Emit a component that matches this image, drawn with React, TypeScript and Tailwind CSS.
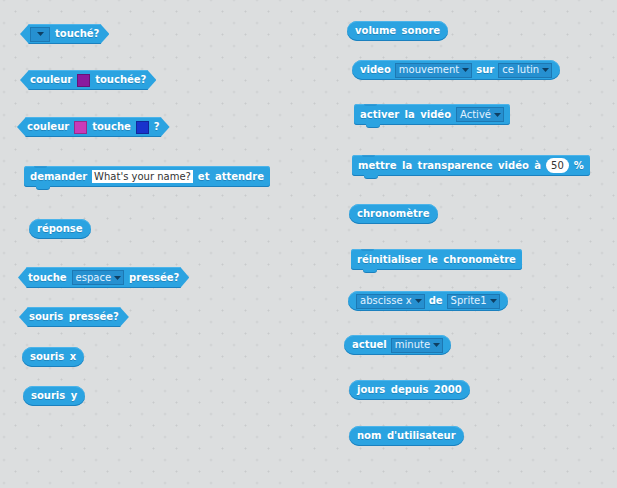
import React from "react";

const font = "font-['DejaVu_Sans',Verdana,sans-serif]";
const label = `${font} text-[10px] font-bold text-white leading-none [word-spacing:2px] [text-shadow:0_1px_0_rgba(0,40,80,0.25)] whitespace-nowrap`;
const body = "bg-[#2ba3e1] shadow-[inset_0_-1px_0_#1b80be,inset_0_1px_0_#4cb4ea]";

const Arrow = () => (
  <svg width="7" height="4" viewBox="0 0 7 4" className="shrink-0">
    <path d="M0 0 L7 0 L3.5 4 Z" fill="#0e3f63" />
  </svg>
);

const Drop = ({ text }: { text?: string }) => (
  <span className={`inline-flex h-[15px] items-center gap-[3px] bg-[#2690d0] border border-[#1d78b3] pl-[3px] pr-[2px] ${text ? "" : "w-[20px] justify-center"}`}>
    {text && <span className={`${font} text-[10px] font-normal text-[#e2f2ff] leading-none [text-shadow:none] [word-spacing:0]`}>{text}</span>}
    <Arrow />
  </span>
);

const Swatch = ({ color }: { color: string }) => (
  <span className={`inline-block w-[13px] h-[13px] border border-black/25 ${color}`} />
);

const Bool = ({ children, className = "" }: { children: React.ReactNode; className?: string }) => (
  <div
    className={`${body} ${label} flex h-[20px] items-center gap-[5px] pl-[10px] pr-[10px] [clip-path:polygon(9px_0,calc(100%-9px)_0,100%_50%,calc(100%-9px)_100%,9px_100%,0_50%)] ${className}`}
  >
    {children}
  </div>
);

const Rep = ({ children, className = "" }: { children: React.ReactNode; className?: string }) => (
  <div className={`${body} ${label} flex h-[20px] items-center gap-[4px] rounded-full px-[8px] ${className}`}>
    {children}
  </div>
);

const Stack = ({ children, className = "" }: { children: React.ReactNode; className?: string }) => (
  <div className={`relative ${className}`}>
    <div className={`${body} ${label} flex h-[21px] items-center gap-[5px] rounded-[3px] px-[6px]`}>{children}</div>
    <div className="absolute left-[10px] top-0 h-[2px] w-[13px] rounded-b-[2px] bg-[#1f8ccc]/60" />
    <div className="absolute left-[12px] top-[20px] h-[3px] w-[14px] rounded-b-[3px] bg-[#2ba3e1] shadow-[0_1px_0_#1b80be]" />
  </div>
);

export default function App() {
  return (
    <div className="w-[617px] h-[488px] overflow-hidden bg-[#dcdedf] bg-[radial-gradient(circle,#c8cacb_0.8px,transparent_1.2px),radial-gradient(circle,#c8cacb_0.8px,transparent_1.2px)] bg-[length:23px_23px] bg-[position:4px_0px,15.5px_11.5px] flex">
      <div className="w-[344px] flex flex-col items-start">
        <Bool className="mt-[24px] ml-[20px]">
          <Drop />
          <span>touché?</span>
        </Bool>
        <Bool className="mt-[26px] ml-[20px]">
          <span>couleur</span>
          <Swatch color="bg-[#8a1a9e]" />
          <span>touchée?</span>
        </Bool>
        <Bool className="mt-[27px] ml-[17px]">
          <span>couleur</span>
          <Swatch color="bg-[#c93ab8]" />
          <span>touche</span>
          <Swatch color="bg-[#1833cc]" />
          <span>?</span>
        </Bool>
        <Stack className="mt-[29px] ml-[24px]">
          <span>demander</span>
          <span className={`${font} inline-flex h-[13px] items-center bg-white px-[2px] text-[10px] font-normal text-[#333] [text-shadow:none] [word-spacing:0]`}>
            What's your name?
          </span>
          <span>et attendre</span>
        </Stack>
        <Rep className="mt-[32px] ml-[29px]">
          <span>réponse</span>
        </Rep>
        <Bool className="mt-[28px] ml-[18px] h-[21px]">
          <span>touche</span>
          <Drop text="espace" />
          <span>pressée?</span>
        </Bool>
        <Bool className="mt-[19px] ml-[19px]">
          <span>souris pressée?</span>
        </Bool>
        <Rep className="mt-[20px] ml-[22px]">
          <span>souris x</span>
        </Rep>
        <Rep className="mt-[19px] ml-[23px]">
          <span>souris y</span>
        </Rep>
      </div>

      <div className="flex-1 flex flex-col items-start">
        <Rep className="mt-[21px] ml-[3px]">
          <span>volume sonore</span>
        </Rep>
        <Rep className="mt-[19px] ml-[8px]">
          <span>video</span>
          <Drop text="mouvement" />
          <span>sur</span>
          <Drop text="ce lutin" />
        </Rep>
        <Stack className="mt-[24px] ml-[10px]">
          <span>activer la vidéo</span>
          <Drop text="Activé" />
        </Stack>
        <Stack className="mt-[30px] ml-[8px]">
          <span>mettre la transparence vidéo à</span>
          <span className={`${font} inline-flex h-[15px] items-center rounded-full bg-white px-[5px] text-[10px] font-normal text-[#333] [text-shadow:none]`}>
            50
          </span>
          <span>%</span>
        </Stack>
        <Rep className="mt-[28px] ml-[5px]">
          <span>chronomètre</span>
        </Rep>
        <Stack className="mt-[25px] ml-[7px]">
          <span>réinitialiser le chronomètre</span>
        </Stack>
        <Rep className="mt-[21px] ml-[4px]">
          <Drop text="abscisse x" />
          <span>de</span>
          <Drop text="Sprite1" />
        </Rep>
        <Rep className="mt-[24px] ml-[0px]">
          <span>actuel</span>
          <Drop text="minute" />
        </Rep>
        <Rep className="mt-[25px] ml-[5px]">
          <span>jours depuis 2000</span>
        </Rep>
        <Rep className="mt-[26px] ml-[5px]">
          <span>nom d'utilisateur</span>
        </Rep>
      </div>
    </div>
  );
}
